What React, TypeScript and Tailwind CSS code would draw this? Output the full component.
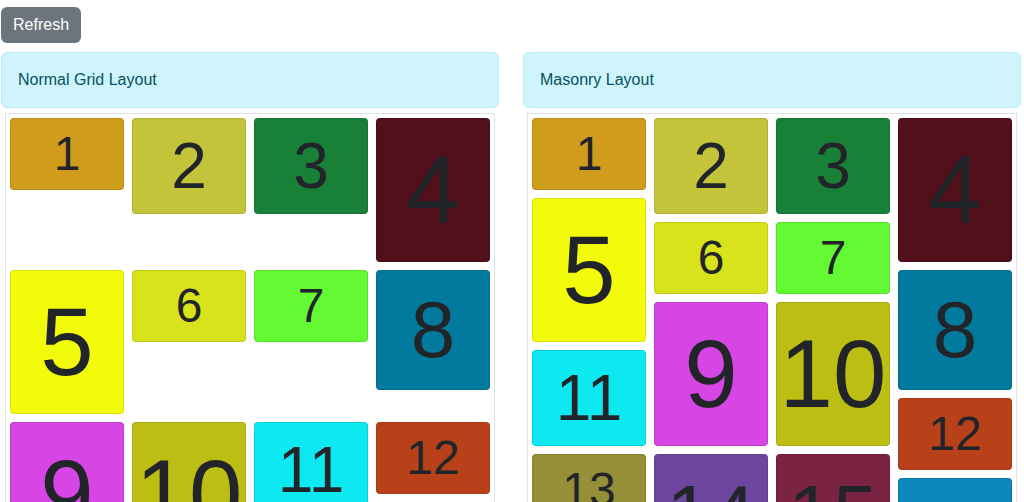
import React from 'react'

type Tile = { id: number; h: number; color: string }

const TILES: Tile[] = [
  { id: 1, h: 72, color: '#d19b1c' },
  { id: 2, h: 96, color: '#c4c43a' },
  { id: 3, h: 96, color: '#198037' },
  { id: 4, h: 144, color: '#52101a' },
  { id: 5, h: 144, color: '#f2fc0a' },
  { id: 6, h: 72, color: '#d8e31c' },
  { id: 7, h: 72, color: '#63f933' },
  { id: 8, h: 120, color: '#017a9e' },
  { id: 9, h: 144, color: '#d745e5' },
  { id: 10, h: 144, color: '#bcbe13' },
  { id: 11, h: 96, color: '#0de9f0' },
  { id: 12, h: 72, color: '#b94119' },
  { id: 13, h: 72, color: '#958f38' },
  { id: 14, h: 120, color: '#6e46a0' },
  { id: 15, h: 120, color: '#7b2342' },
  { id: 16, h: 96, color: '#0c88be' },
]

const GAP = 8

function Box({ tile }: { tile: Tile }) {
  // font scales with tile height, like the original demo
  return (
    <div
      className="flex items-center justify-center rounded border border-black/10 leading-none text-[#212529]"
      style={{ height: tile.h, backgroundColor: tile.color, fontSize: (tile.h * 2) / 3 }}
    >
      {tile.id}
    </div>
  )
}

function Panel({ title, children }: { title: string; children: React.ReactNode }) {
  return (
    <div>
      <div className="flex h-[56px] items-center rounded-md border border-[#b6effb] bg-[#cff4fc] px-4 text-base text-[#055160]">
        {title}
      </div>
      <div className="mx-1 mt-[5px] border border-[#dee2e6] p-1">{children}</div>
    </div>
  )
}

function NormalGrid() {
  return (
    <div className="grid grid-cols-4 items-start gap-2">
      {TILES.map((t) => (
        <Box key={t.id} tile={t} />
      ))}
    </div>
  )
}

function MasonryGrid() {
  // place each tile in the shortest column
  const cols: Tile[][] = [[], [], [], []]
  const heights = [0, 0, 0, 0]
  TILES.forEach((t) => {
    let idx = 0
    for (let i = 1; i < 4; i++) if (heights[i] < heights[idx]) idx = i
    cols[idx].push(t)
    heights[idx] += t.h + GAP
  })

  return (
    <div className="grid grid-cols-4 items-start gap-2">
      {cols.map((col, i) => (
        <div key={i} className="flex flex-col gap-2">
          {col.map((t) => (
            <Box key={t.id} tile={t} />
          ))}
        </div>
      ))}
    </div>
  )
}

export default function App() {
  return (
    <div className="bg-white px-[1px] pt-[7px] font-['Liberation_Sans',Arial,sans-serif]">
      <button className="h-[36px] rounded-md bg-[#6c757d] px-3 text-base text-white">Refresh</button>
      <div className="mt-[9px] grid grid-cols-2 gap-6 pr-[2px]">
        <Panel title="Normal Grid Layout">
          <NormalGrid />
        </Panel>
        <Panel title="Masonry Layout">
          <MasonryGrid />
        </Panel>
      </div>
    </div>
  )
}
